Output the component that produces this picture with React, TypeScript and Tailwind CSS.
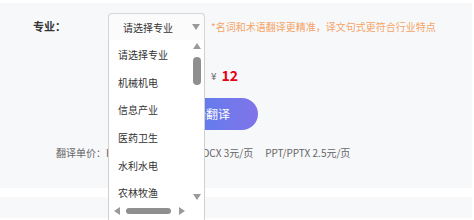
import React from "react";

// ---------------------------------------------------------------------------
// Dati
// ---------------------------------------------------------------------------
const majors = ["请选择专业", "机械机电", "信息产业", "医药卫生", "水利水电", "农林牧渔"];

function Tri({ dir }: { dir: "up" | "down" | "left" | "right" }) {
  const pts = {
    up: "0,6 4,0 8,6",
    down: "0,0 8,0 4,6",
    left: "6,0 6,8 0,4",
    right: "0,0 0,8 6,4",
  }[dir];
  const w = dir === "up" || dir === "down" ? 8 : 6;
  const h = dir === "up" || dir === "down" ? 6 : 8;
  return (
    <svg width={w} height={h} viewBox={`0 0 ${w} ${h}`} className="block">
      <polygon points={pts} fill="#9a9a9a" />
    </svg>
  );
}

// ---------------------------------------------------------------------------
// Select aperto con lista
// ---------------------------------------------------------------------------
function MajorSelect() {
  return (
    <div className="relative h-[27px] w-[97px]">
      <div className="flex h-full items-center rounded-t-[4px] border border-b-0 border-[#d6d6d6] bg-[#fbfbfb] pl-[14px] pr-[4px]">
        <span className="flex-1 text-[10px] text-[#333]">请选择专业</span>
        <Tri dir="down" />
      </div>
      <div className="absolute left-0 top-full h-[185px] w-[97px] border-x border-[#d0d0d0] bg-white pt-px">
        {majors.map((m) => (
          <div key={m} className="flex h-[27.6px] items-center pl-[9px] text-[10px] text-[#333]">
            {m}
          </div>
        ))}
        <div className="absolute left-[84px] top-[3px]">
          <Tri dir="up" />
        </div>
        <div className="absolute left-[84px] top-[17px] h-[28px] w-[8px] rounded-full bg-[#8f8f8f]" />
        <div className="absolute left-[84px] top-[154px]">
          <Tri dir="down" />
        </div>
        <div className="absolute left-[5px] top-[167px]">
          <Tri dir="left" />
        </div>
        <div className="absolute left-[17px] top-[168px] h-[6px] w-[45px] rounded-full bg-[#8f8f8f]" />
        <div className="absolute left-[70px] top-[167px]">
          <Tri dir="right" />
        </div>
      </div>
    </div>
  );
}

export default function App() {
  return (
    <div className="relative h-[220px] w-[474px] overflow-hidden bg-white font-['Noto_Sans_CJK_SC','Microsoft_YaHei',sans-serif]">
      <div className="mt-[3px] h-[185px] w-[472px] bg-[#f7f8fa] pl-[33px] pt-[10px]">
        <div className="flex h-[27px] items-center">
          <span className="w-[75px] text-[11px] font-bold text-[#333]">专业：</span>
          <MajorSelect />
          <span className="ml-[6px] text-[10px] text-[#f5a467]">*名词和术语翻译更精准，译文句式更符合行业特点</span>
        </div>
        <div className="mt-[25px] flex h-[20px] items-center pl-[178px]">
          <span className="text-[10px] text-[#666]">¥</span>
          <span className="ml-[5px] text-[14px] font-bold leading-none text-[#e60012]">12</span>
        </div>
        <button
          type="button"
          className="ml-[121px] mt-[13px] flex h-[32px] w-[104px] items-center justify-center rounded-full bg-gradient-to-r from-[#3e82f2] to-[#8074e8] text-[12px] text-white">
          开始翻译
        </button>
        <div className="ml-[23px] mt-[15px] flex h-[14px] items-center text-[10px] text-[#666]">
          <span>翻译单价：PDF 3元/页</span>
          <span className="ml-[14px]">DOC/DOCX 3元/页</span>
          <span className="ml-[12px]">PPT/PPTX 2.5元/页</span>
        </div>
      </div>
      <div className="mt-[9px] h-[21px] w-[472px] bg-[#f7f8fa]" />
    </div>
  );
}
